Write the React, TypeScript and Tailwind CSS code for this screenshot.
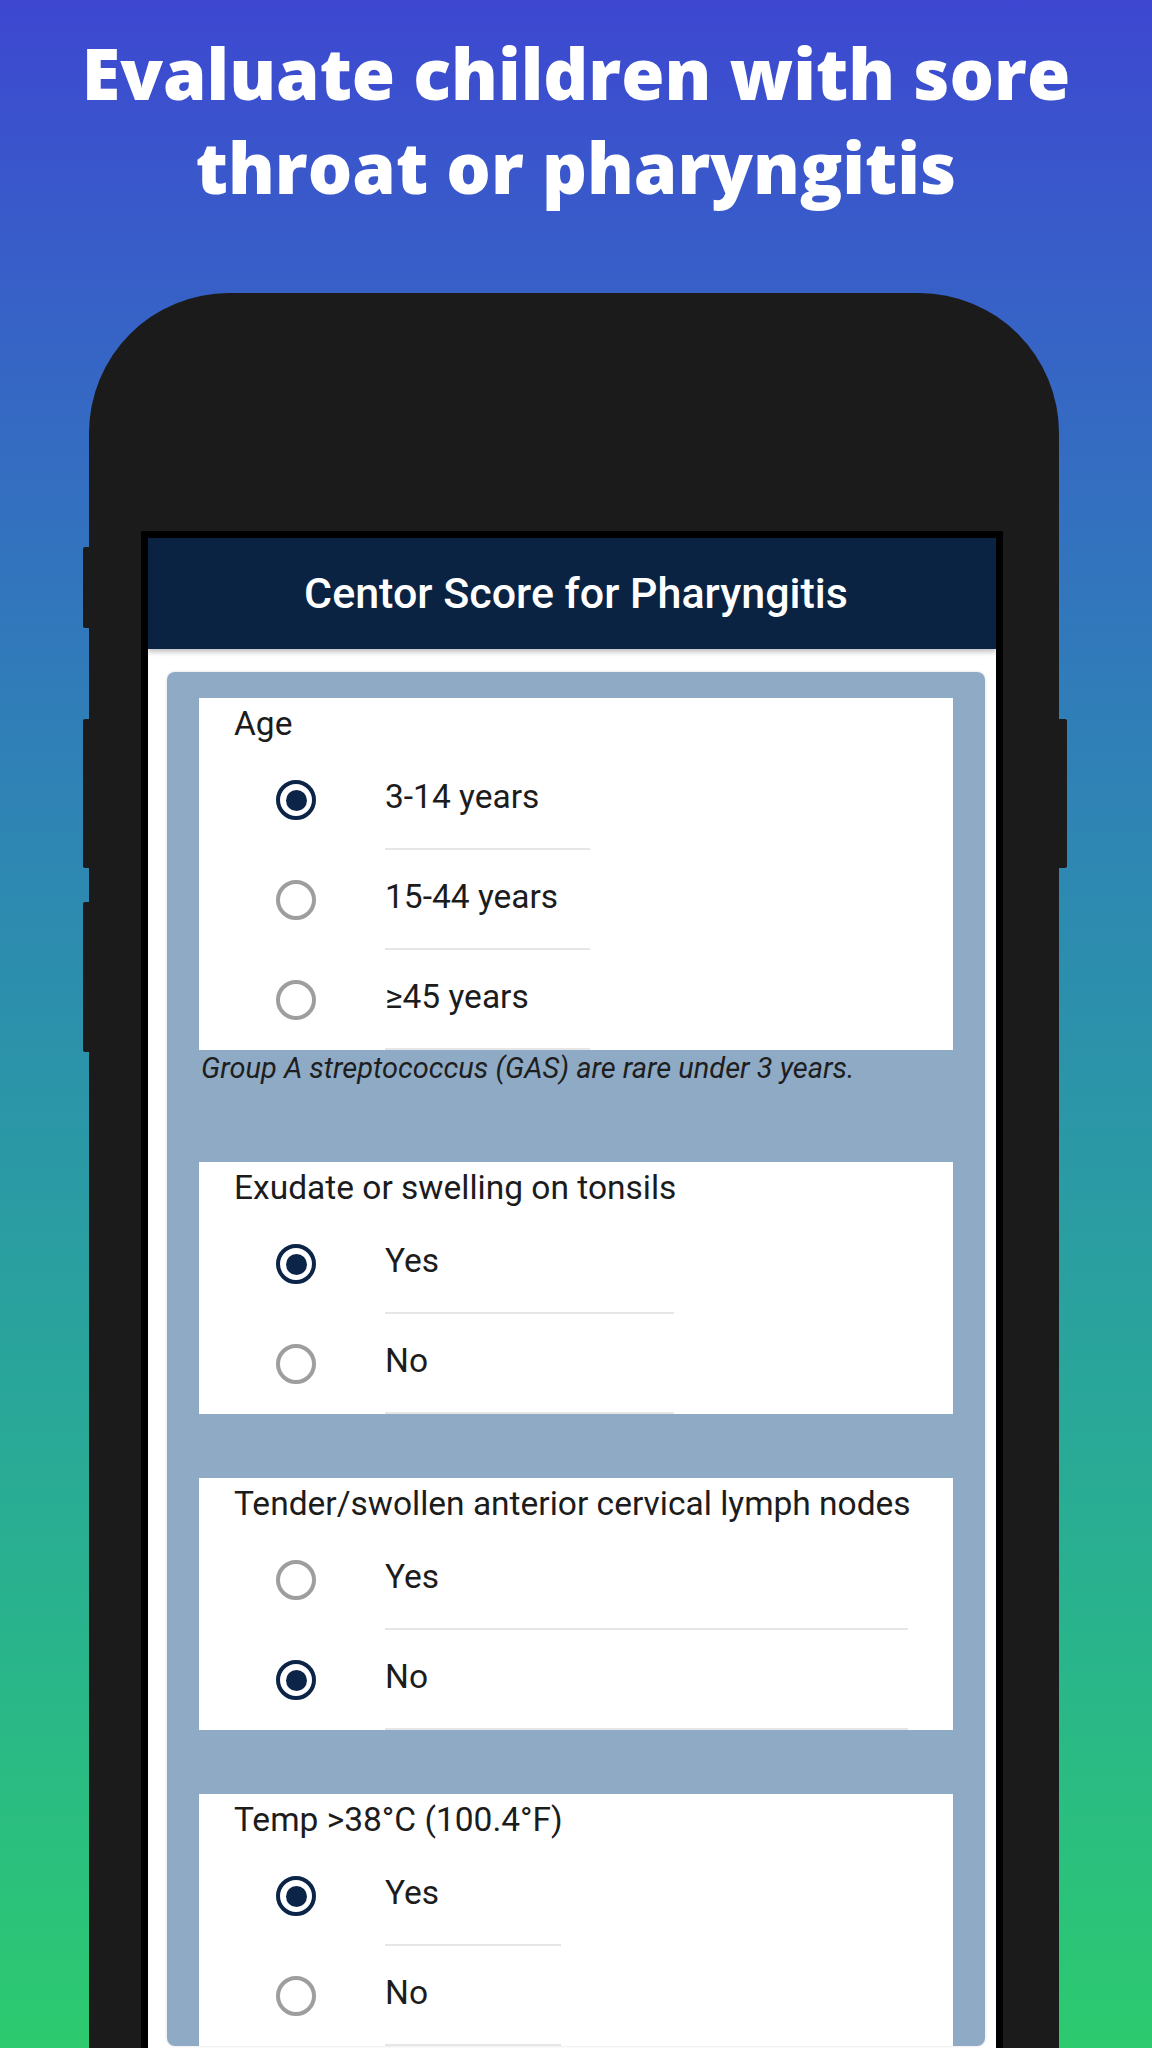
import React from "react";

type Option = { label: string; checked: boolean };
type Question = { title: string; lineWidth: string; options: Option[]; note?: string };

const questions: Question[] = [
  {
    title: "Age",
    lineWidth: "w-[205px]",
    options: [
      { label: "3-14 years", checked: true },
      { label: "15-44 years", checked: false },
      { label: "≥45 years", checked: false },
    ],
    note: "Group A streptococcus (GAS) are rare under 3 years.",
  },
  {
    title: "Exudate or swelling on tonsils",
    lineWidth: "w-[289px]",
    options: [
      { label: "Yes", checked: true },
      { label: "No", checked: false },
    ],
  },
  {
    title: "Tender/swollen anterior cervical lymph nodes",
    lineWidth: "w-[523px]",
    options: [
      { label: "Yes", checked: false },
      { label: "No", checked: true },
    ],
  },
  {
    title: "Temp >38°C (100.4°F)",
    lineWidth: "w-[176px]",
    options: [
      { label: "Yes", checked: true },
      { label: "No", checked: false },
    ],
  },
];

function Radio({ checked }: { checked: boolean }) {
  return checked ? (
    <div className="flex h-[40px] w-[40px] items-center justify-center rounded-full border-[4px] border-[#0c2448]">
      <div className="h-[21px] w-[21px] rounded-full bg-[#0c2448]" />
    </div>
  ) : (
    <div className="h-[40px] w-[40px] rounded-full border-[4px] border-[#9e9e9e]" />
  );
}

function QuestionCard({ q }: { q: Question }) {
  return (
    <div className={q.note ? "" : "mb-[64px]"}>
      <div className="bg-white">
        <div className="flex h-[52px] items-center pl-[35px] text-[33.5px] text-[#1c1c1c]">{q.title}</div>
        {q.options.map((o) => (
          <div key={o.label} className="flex h-[100px] items-stretch">
            <div className="flex w-[186px] items-center pl-[77px]">
              <Radio checked={o.checked} />
            </div>
            <div className={`flex items-center border-b-2 border-[#e6e6e6] pb-[4px] text-[33.5px] text-[#1c1c1c] ${q.lineWidth}`}>
              {o.label}
            </div>
          </div>
        ))}
      </div>
      {q.note && (
        <div className="mb-[64px] h-[48px] pl-[2px] pt-[2px] text-[29px] italic leading-[32px] text-[#1e1e1e]">
          {q.note}
        </div>
      )}
    </div>
  );
}

export default function App() {
  return (
    <div className="h-[2048px] w-[1152px] overflow-hidden bg-gradient-to-b from-[#3d47d1] to-[#2dca6e] font-['Open_Sans',sans-serif]">
      <h1 className="pt-[26px] text-center text-[70px] font-extrabold leading-[94px] text-white">
        Evaluate children with sore
        <br />
        throat or pharyngitis
      </h1>

      {/* phone body */}
      <div className="relative ml-[89px] mt-[79px] h-[1800px] w-[970px] rounded-t-[140px] bg-[#1b1b1b] pl-[52px] pt-[238px]">
        <div className="absolute left-[-6px] top-[254px] h-[81px] w-[6px] rounded-l-[2px] bg-[#1b1b1b]" />
        <div className="absolute left-[-6px] top-[426px] h-[149px] w-[6px] rounded-l-[2px] bg-[#1b1b1b]" />
        <div className="absolute left-[-6px] top-[609px] h-[150px] w-[6px] rounded-l-[2px] bg-[#1b1b1b]" />
        <div className="absolute right-[-8px] top-[426px] h-[149px] w-[8px] rounded-r-[2px] bg-[#1b1b1b]" />

        {/* screen */}
        <div className="h-[1600px] w-[862px] border-[7px] border-b-0 border-black bg-white font-['Roboto',sans-serif]">
          <div className="relative z-10 flex h-[111px] items-center justify-center bg-[#0b2343] pl-[8px] text-[43px] font-medium text-white shadow-[0_3px_5px_rgba(0,0,0,0.25)]">
            Centor Score for Pharyngitis
          </div>
          <div className="pl-[19px] pr-[11px] pt-[23px]">
            <div className="rounded-[8px] bg-[#8eaac5] px-[32px] pt-[26px] shadow-[0_0_3px_rgba(0,0,0,0.15)]">
              {questions.map((q) => (
                <QuestionCard key={q.title} q={q} />
              ))}
            </div>
          </div>
        </div>
      </div>
    </div>
  );
}
